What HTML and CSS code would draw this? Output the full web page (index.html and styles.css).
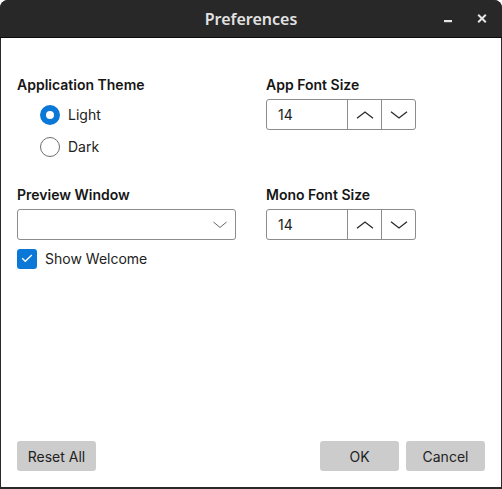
FILE: index.html
```html
<!DOCTYPE html>
<html>
<head>
<meta charset="utf-8">
<link rel="stylesheet" href="styles.css">
</head>
<body>
<div class="window">
  <div class="titlebar">
    <span class="title">Preferences</span>
    <div class="controls">
      <svg class="ctl" width="14" height="14" viewBox="0 0 14 14"><rect x="3" y="8" width="8" height="2.2" fill="#e6e6e6"/></svg>
      <svg class="ctl" width="14" height="14" viewBox="0 0 14 14"><path d="M3.2 2.7 L10.8 10.3 M10.8 2.7 L3.2 10.3" stroke="#e6e6e6" stroke-width="2" fill="none"/></svg>
    </div>
  </div>
  <div class="content">
    <div class="grid">
      <div class="col-left">
        <div class="label">Application Theme</div>
        <div class="radios">
          <div class="radio-row"><span class="radio checked"></span><span class="opt">Light</span></div>
          <div class="radio-row"><span class="radio"></span><span class="opt">Dark</span></div>
        </div>
      </div>
      <div class="col-right">
        <div class="label">App Font Size</div>
        <div class="spin">
          <div class="spin-val">14</div>
          <div class="spin-btn"><svg width="18" height="8" viewBox="0 0 18 8"><path d="M1 7.3 L9 1 L17 7.3" stroke="#2a2a2a" stroke-width="1.3" fill="none"/></svg></div>
          <div class="spin-btn"><svg width="18" height="8" viewBox="0 0 18 8"><path d="M1 0.7 L9 7 L17 0.7" stroke="#2a2a2a" stroke-width="1.3" fill="none"/></svg></div>
        </div>
      </div>
      <div class="col-left">
        <div class="label">Preview Window</div>
        <div class="combo">
          <svg width="16" height="8" viewBox="0 0 16 8"><path d="M1.5 1 L8 6.5 L14.5 1" stroke="#666" stroke-width="1" fill="none"/></svg>
        </div>
        <div class="check-row">
          <span class="checkbox"><svg width="20" height="20" viewBox="0 0 20 20"><path d="M5.2 9.2 L8.3 12.2 L14.8 6" stroke="#fff" stroke-width="1.4" fill="none"/></svg></span>
          <span class="opt">Show Welcome</span>
        </div>
      </div>
      <div class="col-right">
        <div class="label">Mono Font Size</div>
        <div class="spin">
          <div class="spin-val">14</div>
          <div class="spin-btn"><svg width="18" height="8" viewBox="0 0 18 8"><path d="M1 7.3 L9 1 L17 7.3" stroke="#2a2a2a" stroke-width="1.3" fill="none"/></svg></div>
          <div class="spin-btn"><svg width="18" height="8" viewBox="0 0 18 8"><path d="M1 0.7 L9 7 L17 0.7" stroke="#2a2a2a" stroke-width="1.3" fill="none"/></svg></div>
        </div>
      </div>
    </div>
    <div class="footer">
      <button class="btn">Reset All</button>
      <div class="right-btns">
        <button class="btn">OK</button>
        <button class="btn">Cancel</button>
      </div>
    </div>
  </div>
</div>
</body>
</html>
```

FILE: styles.css
```css
html, body {
  margin: 0;
  padding: 0;
  background: #ffffff;
}
body {
  width: 502px;
  height: 489px;
  overflow: hidden;
  font-family: Inter, "Liberation Sans", sans-serif;
  font-size: 14px;
  color: #1c1c1c;
}
.window {
  box-sizing: border-box;
  width: 502px;
  height: 489px;
  display: flex;
  flex-direction: column;
  border-radius: 8px 8px 0 0;
  overflow: hidden;
  background: #2a2a2a;
}
.titlebar {
  height: 37px;
  flex: none;
  background: #282828;
  border-bottom: 1px solid #0c0c0c;
  display: flex;
  align-items: center;
  justify-content: center;
  position: relative;
}
.title {
  font-family: "Noto Sans", sans-serif;
  font-weight: 600;
  font-size: 16px;
  color: #e2e2e2;
  margin-top: 1px;
}
.controls {
  position: absolute;
  right: 13px;
  top: 12px;
  display: flex;
  gap: 20px;
}
.ctl {
  display: block;
}
.content {
  flex: 1;
  background: #ffffff;
  margin: 0 1px 2px 1px;
  padding: 37px 16px 16px 16px;
  display: flex;
  flex-direction: column;
  justify-content: space-between;
}
.grid {
  display: grid;
  grid-template-columns: 219px 150px;
  column-gap: 30px;
  row-gap: 28px;
  align-items: start;
}
.col-left, .col-right {
  display: flex;
  flex-direction: column;
}
.label {
  font-weight: 600;
  line-height: 20px;
  height: 20px;
  margin-bottom: 4px;
  color: #161616;
}
.radios {
  display: flex;
  flex-direction: column;
  gap: 12px;
  padding-left: 23px;
  padding-top: 6px;
}
.radio-row {
  display: flex;
  align-items: center;
  gap: 8px;
  height: 20px;
}
.radio {
  box-sizing: border-box;
  width: 20px;
  height: 20px;
  border-radius: 50%;
  border: 1px solid #6e6e6e;
  background: #fff;
}
.radio.checked {
  border: 6px solid #0b78d7;
}
.opt {
  line-height: 20px;
  color: #222;
}
.spin {
  box-sizing: border-box;
  height: 31px;
  border: 1px solid #8c8c8c;
  border-radius: 3px;
  display: flex;
}
.spin-val {
  width: 81px;
  padding-left: 11px;
  box-sizing: border-box;
  line-height: 29px;
  color: #222;
}
.spin-btn {
  width: 34px;
  border-left: 1px solid #8c8c8c;
  display: flex;
  align-items: center;
  justify-content: center;
}
.spin-btn:last-child {
  width: 33px;
}
.spin-btn svg {
  display: block;
}
.combo {
  box-sizing: border-box;
  height: 31px;
  border: 1px solid #8c8c8c;
  border-radius: 3px;
  display: flex;
  align-items: center;
  justify-content: flex-end;
  padding-right: 7px;
}
.combo svg {
  display: block;
}
.check-row {
  display: flex;
  align-items: center;
  gap: 8px;
  margin-top: 9px;
  height: 20px;
}
.checkbox {
  width: 20px;
  height: 20px;
  border-radius: 3px;
  background: #0b78d7;
  display: block;
}
.checkbox svg {
  display: block;
}
.footer {
  display: flex;
  justify-content: space-between;
  align-items: center;
}
.right-btns {
  display: flex;
  gap: 7px;
}
.btn {
  font-family: Inter, "Liberation Sans", sans-serif;
  font-size: 14px;
  color: #222;
  background: #cccccc;
  border: none;
  border-radius: 3px;
  width: 79px;
  height: 30px;
  padding: 0;
  margin: 0;
}
```
